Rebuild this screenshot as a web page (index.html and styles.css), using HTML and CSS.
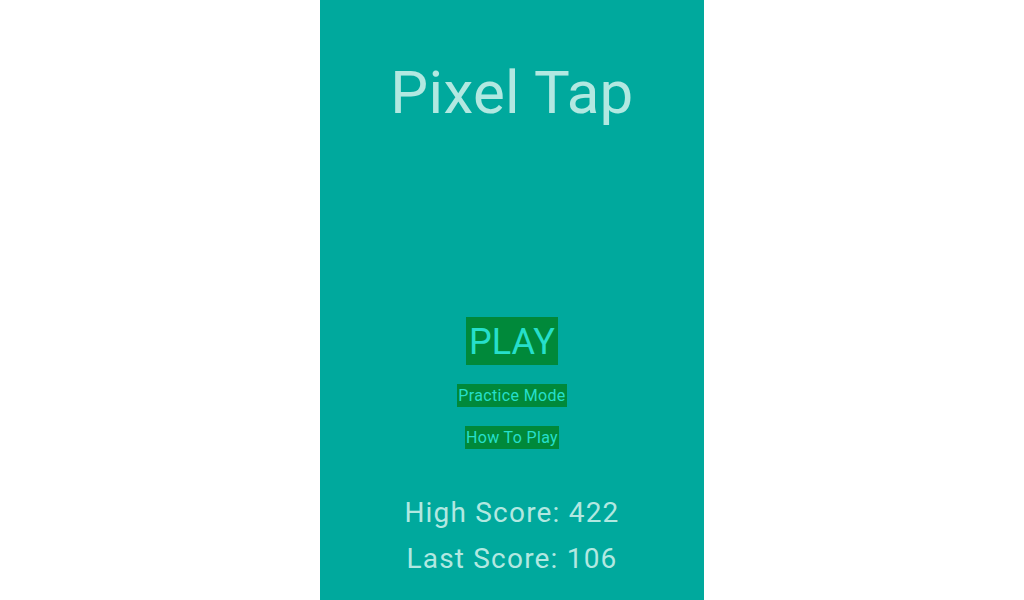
FILE: index.html
```html
<!DOCTYPE html>
<html>
<head>
<meta charset="utf-8">
<link rel="stylesheet" href="styles.css">
</head>
<body>
<div class="screen">
  <h1 class="title">Pixel Tap</h1>
  <div class="btn btn-play">PLAY</div>
  <div class="btn btn-small btn-first">Practice Mode</div>
  <div class="btn btn-small">How To Play</div>
  <div class="scores">
    <div class="score">High Score: 422</div>
    <div class="score">Last Score: 106</div>
  </div>
</div>
</body>
</html>
```
FILE: styles.css
```css
html, body {
  margin: 0;
  padding: 0;
  background: #ffffff;
}
body {
  font-family: Roboto, "Liberation Sans", sans-serif;
}
.screen {
  width: 384px;
  height: 600px;
  margin: 0 auto;
  background: #00a99d;
  display: flex;
  flex-direction: column;
  align-items: center;
  overflow: hidden;
}
.title {
  margin: 0;
  padding-top: 58px;
  font-size: 60px;
  font-weight: 400;
  line-height: 70px;
  color: #b2e8e1;
  letter-spacing: 0.3px;
}
.btn {
  background: #00893a;
  color: #26dfcb;
  white-space: nowrap;
}
.btn-play {
  margin-top: 189px;
  font-size: 36px;
  line-height: 46px;
  padding: 2px 3px 0;
}
.btn-small {
  margin-top: 19px;
  font-size: 16px;
  line-height: 22px;
  padding: 1px 1px 0;
  letter-spacing: 0.35px;
}
.scores {
  margin-top: 41px;
  display: flex;
  flex-direction: column;
  align-items: center;
}
.score {
  font-size: 28px;
  line-height: 46px;
  color: #b2e8e1;
  letter-spacing: 1.2px;
}
```
